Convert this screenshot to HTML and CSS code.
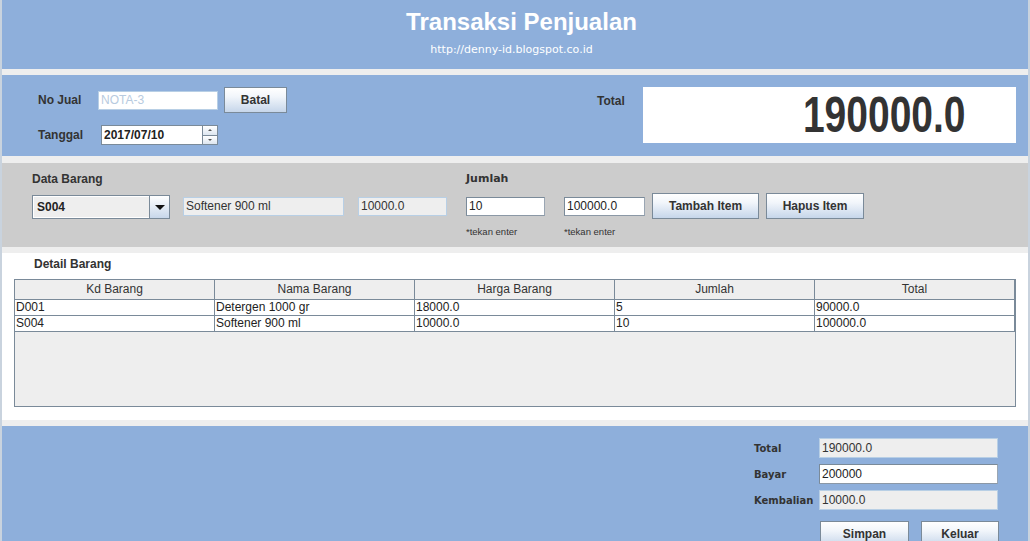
FILE: index.html
```html
<!DOCTYPE html>
<html>
<head>
<meta charset="utf-8">
<title>Transaksi Penjualan</title>
<link rel="stylesheet" href="styles.css">
</head>
<body>
<div class="frame">
  <header class="hdr">
    <h1 class="title">Transaksi Penjualan</h1>
    <div class="url">http://denny-id.blogspot.co.id</div>
  </header>

  <section class="top">
    <div class="top-left">
      <div class="row r1">
        <span class="lbl w60">No Jual</span>
        <div class="field disabled nota">NOTA-3</div>
        <button class="btn batal">Batal</button>
      </div>
      <div class="row r2">
        <span class="lbl w63">Tanggal</span>
        <div class="date">
          <div class="date-text">2017/07/10</div>
          <div class="spin"><span class="up"></span><span class="down"></span></div>
        </div>
      </div>
    </div>
    <div class="top-right">
      <span class="lbl total-lbl">Total</span>
      <div class="total-box"><span class="big">190000.0</span></div>
    </div>
  </section>

  <section class="data">
    <span class="lbl dlbl">Data Barang</span>
    <span class="jlbl">Jumlah</span>
    <div class="combo c1">
      <div class="combo-text">S004</div>
      <div class="combo-btn"></div>
    </div>
    <div class="field ro c2 wname">Softener 900 ml</div>
    <div class="field ro c3 wprice">10000.0</div>
    <div class="field edit c4 wqty">10</div>
    <div class="field edit c5 wsub">100000.0</div>
    <button class="btn c6 wtambah">Tambah Item</button>
    <button class="btn c7 whapus">Hapus Item</button>
    <span class="note n4">*tekan enter</span>
    <span class="note n5">*tekan enter</span>
  </section>

  <section class="detail">
    <div class="lbl dtl-lbl">Detail Barang</div>
    <div class="tbl">
      <div class="tr">
        <div class="th">Kd Barang</div>
        <div class="th">Nama Barang</div>
        <div class="th">Harga Barang</div>
        <div class="th">Jumlah</div>
        <div class="th">Total</div>
      </div>
      <div class="tr">
        <div class="td">D001</div>
        <div class="td">Detergen 1000 gr</div>
        <div class="td">18000.0</div>
        <div class="td">5</div>
        <div class="td">90000.0</div>
      </div>
      <div class="tr">
        <div class="td">S004</div>
        <div class="td">Softener 900 ml</div>
        <div class="td">10000.0</div>
        <div class="td">10</div>
        <div class="td">100000.0</div>
      </div>
    </div>
  </section>

  <section class="bottom">
    <div class="summary">
      <div class="sgrid">
        <span class="slbl">Total</span>
        <div class="field ro">190000.0</div>
        <span class="slbl">Bayar</span>
        <div class="field edit">200000</div>
        <span class="slbl">Kembalian</span>
        <div class="field ro">10000.0</div>
      </div>
      <div class="sbtns">
        <button class="btn wsimpan">Simpan</button>
        <button class="btn wkeluar">Keluar</button>
      </div>
    </div>
  </section>
</div>
</body>
</html>
```
FILE: styles.css
```css
* { box-sizing: border-box; }
html, body { margin: 0; padding: 0; }
body {
  background: #c9d3de;
  font-family: "Liberation Sans", Arial, sans-serif;
  font-size: 12px;
  color: #333333;
  width: 1030px;
  height: 541px;
  overflow: hidden;
}
.frame {
  margin: 0 2px;
  background: #eeeeee;
  height: 541px;
  overflow: hidden;
}

/* header */
.hdr {
  background: #8eafdb;
  height: 69px;
  padding-top: 8px;
  text-align: center;
  color: #ffffff;
}
.title {
  margin: 0;
  padding-left: 13px;
  font-size: 24px;
  line-height: 28px;
  font-weight: bold;
}
.url {
  font-family: "DejaVu Sans", sans-serif;
  font-size: 11px;
  line-height: 13px;
  margin-top: 7px;
  padding-right: 7px;
}

/* generic */
.lbl { font-weight: bold; line-height: 14px; }
.field {
  height: 19px;
  line-height: 17px;
  padding: 0 2px;
  white-space: nowrap;
  overflow: hidden;
  color: #333333;
}
.ro { background: #eeeeee; border: 1px solid #b8cfe5; }
.disabled { background: #ffffff; border: 1px solid #b8cfe5; color: #b8cbe0; }
.edit {
  background: #ffffff;
  border: 1px solid #7a8a99;
  border-right-color: #9aa6b3;
  border-bottom-color: #8b98a6;
  color: #222222;
}
.btn {
  font: bold 12px "Liberation Sans", Arial, sans-serif;
  color: #333333;
  height: 26px;
  border: 1px solid #7a8a99;
  background: linear-gradient(#ffffff 0%, #f2f6fb 35%, #c6d6ea 100%);
  padding: 0;
  margin: 0;
}

/* top panel */
.top {
  background: #8eafdb;
  height: 81px;
  margin-top: 6px;
  display: flex;
  padding: 12px 12px 0 36px;
}
.row { display: flex; align-items: center; }
.r1 { height: 26px; }
.r2 { height: 20px; margin-top: 12px; }
.w60 { width: 60px; }
.w63 { width: 63px; }
.nota { width: 120px; }
.batal { width: 63px; margin-left: 6px; }
.date { display: flex; width: 117px; height: 20px; }
.date-text {
  flex: 1;
  background: #ffffff;
  border: 1px solid #7a8a99;
  border-right: none;
  font-weight: bold;
  line-height: 18px;
  padding-left: 2px;
  color: #222222;
}
.spin { width: 16px; display: flex; flex-direction: column; }
.spin span {
  flex: 1;
  border: 1px solid #7a8a99;
  background: linear-gradient(#ffffff, #dde6f0);
  display: flex;
  align-items: center;
  justify-content: center;
}
.spin .down { border-top: none; }
.spin .up::after {
  content: "";
  border-left: 2px solid transparent;
  border-right: 2px solid transparent;
  border-bottom: 2px solid #555;
}
.spin .down::after {
  content: "";
  border-left: 2px solid transparent;
  border-right: 2px solid transparent;
  border-top: 2px solid #555;
}
.top-right { margin-left: auto; display: flex; align-items: flex-start; }
.total-lbl { width: 46px; margin-top: 7px; }
.total-box {
  width: 373px;
  height: 56px;
  background: #ffffff;
  display: flex;
  align-items: center;
  justify-content: flex-end;
  padding-right: 50px;
}
.big {
  display: inline-block;
  font-size: 50px;
  line-height: 50px;
  font-weight: bold;
  color: #333333;
  transform: scaleX(0.78);
  transform-origin: right center;
}

/* data barang */
.data {
  background: #cccccc;
  height: 84px;
  margin-top: 7px;
  padding: 9px 0 0 30px;
  display: grid;
  grid-template-columns: 151px 175px 108px 98px 88px 114px 98px;
  grid-template-rows: 14px 26px 11px;
  row-gap: 7px;
  align-items: center;
}
.dlbl { grid-column: 1 / 3; grid-row: 1; }
.jlbl {
  grid-column: 4; grid-row: 1;
  font-family: "DejaVu Sans", sans-serif;
  font-weight: bold;
  font-size: 11px;
  line-height: 14px;
}
.c1 { grid-column: 1; grid-row: 2; }
.c2 { grid-column: 2; grid-row: 2; }
.c3 { grid-column: 3; grid-row: 2; }
.c4 { grid-column: 4; grid-row: 2; }
.c5 { grid-column: 5; grid-row: 2; }
.c6 { grid-column: 6; grid-row: 2; }
.c7 { grid-column: 7; grid-row: 2; }
.n4 { grid-column: 4; grid-row: 3; }
.n5 { grid-column: 5; grid-row: 3; }
.wname { width: 161px; }
.wprice { width: 89px; }
.wqty { width: 79px; }
.wsub { width: 81px; }
.wtambah { width: 107px; }
.whapus { width: 98px; }
.note { font-size: 9.5px; line-height: 11px; color: #333333; }
.combo {
  display: flex;
  width: 138px;
  height: 24px;
  border: 1px solid #7a8a99;
  background: #eeeeee;
  align-self: end;
}
.combo-text {
  flex: 1;
  font-weight: bold;
  line-height: 20px;
  padding-left: 3px;
  border: 1px solid #ffffff;
  border-right: none;
  color: #222222;
}
.combo-btn {
  width: 20px;
  border-left: 1px solid #7a8a99;
  background: linear-gradient(#ffffff, #c8d7ea);
  display: flex;
  align-items: center;
  justify-content: center;
}
.combo-btn::after {
  content: "";
  border-left: 5px solid transparent;
  border-right: 5px solid transparent;
  border-top: 5px solid #111111;
}

/* detail */
.detail {
  background: #ffffff;
  height: 167px;
  margin-top: 6px;
  padding: 4px 0 0 12px;
}
.dtl-lbl { margin-left: 20px; }
.tbl {
  margin-top: 8px;
  width: 1002px;
  height: 128px;
  border: 1px solid #7a8a99;
  background: #eeeeee;
}
.tr { display: grid; grid-template-columns: repeat(5, 200px); }
.th {
  height: 20px;
  line-height: 19px;
  text-align: center;
  background: #eeeeee;
  border-right: 1px solid #7a8a99;
  border-bottom: 1px solid #7a8a99;
  color: #333333;
}
.td {
  height: 16px;
  line-height: 15px;
  background: #ffffff;
  border-right: 1px solid #7a8a99;
  border-bottom: 1px solid #7a8a99;
  padding-left: 1px;
  color: #222222;
  white-space: nowrap;
}

/* bottom */
.bottom {
  background: #8eafdb;
  height: 115px;
  margin-top: 6px;
  padding: 12px 30px 0 0;
  display: flex;
  justify-content: flex-end;
  overflow: hidden;
}
.summary { width: 244px; }
.sgrid {
  display: grid;
  grid-template-columns: 65px 179px;
  grid-auto-rows: 20px;
  row-gap: 6px;
  align-items: center;
}
.sgrid .field { height: 20px; line-height: 18px; }
.slbl {
  font-family: "DejaVu Sans", sans-serif;
  font-weight: bold;
  font-size: 10px;
  color: #333333;
}
.sbtns { display: flex; gap: 12px; margin-top: 11px; padding-left: 66px; }
.wsimpan { width: 89px; flex: none; }
.wkeluar { width: 78px; flex: none; }
```
